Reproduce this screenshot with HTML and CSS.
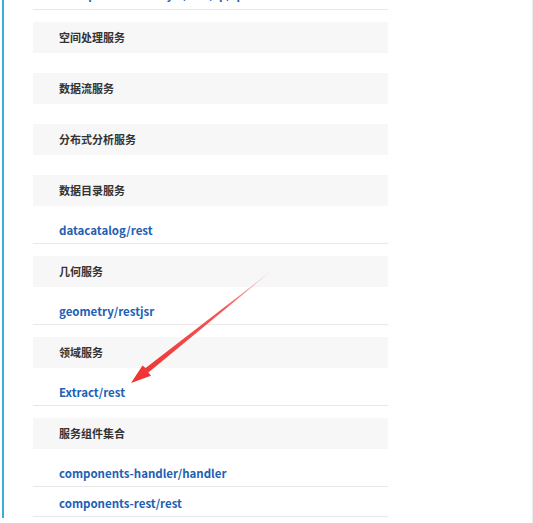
FILE: index.html
```html
<!DOCTYPE html>
<html lang="zh">
<head>
<meta charset="utf-8">
<link rel="stylesheet" href="styles.css">
</head>
<body>
<div class="page">
  <div class="panel">
    <ul class="links top">
      <li><a href="#">transportationanalyst/rest/tp/sp</a></li>
    </ul>
    <section class="group">
      <h3>空间处理服务</h3>
      <ul class="links"></ul>
    </section>
    <section class="group">
      <h3>数据流服务</h3>
      <ul class="links"></ul>
    </section>
    <section class="group">
      <h3>分布式分析服务</h3>
      <ul class="links"></ul>
    </section>
    <section class="group">
      <h3>数据目录服务</h3>
      <ul class="links"><li><a href="#">datacatalog/rest</a></li></ul>
    </section>
    <section class="group">
      <h3>几何服务</h3>
      <ul class="links"><li><a href="#">geometry/restjsr</a></li></ul>
    </section>
    <section class="group">
      <h3>领域服务</h3>
      <ul class="links"><li><a href="#">Extract/rest</a></li></ul>
    </section>
    <section class="group">
      <h3>服务组件集合</h3>
      <ul class="links">
        <li><a href="#">components-handler/handler</a></li>
        <li><a href="#">components-rest/rest</a></li>
      </ul>
    </section>
  </div>
  <svg class="arrow" width="533" height="523" viewBox="0 0 533 523">
    <defs>
      <linearGradient id="fade" x1="275" y1="268" x2="131" y2="383" gradientUnits="userSpaceOnUse">
        <stop offset="0" stop-color="#f23b3b" stop-opacity="0.05"/>
        <stop offset="0.35" stop-color="#f23b3b" stop-opacity="0.85"/>
        <stop offset="1" stop-color="#f03030"/>
      </linearGradient>
    </defs>
    <polygon fill="url(#fade)" points="275,268 148.4,372.4 151,375.8 131,383 142.5,365.5 145.6,368.0"/>
  </svg>
</div>
</body>
</html>
```

FILE: styles.css
```css
html, body {
  margin: 0;
  padding: 0;
  background: #ffffff;
}
body {
  font-family: "Noto Sans CJK SC", "Noto Sans", sans-serif;
  overflow: hidden;
}
.page {
  position: relative;
  width: 532px;
  height: 523px;
  border-right: 1px solid #ececec;
  overflow: hidden;
}
.panel {
  margin-left: 2px;
  margin-top: -20px;
  width: 355px;
  border-left: 2px solid #3ab0d8;
  padding-left: 29px;
  padding-bottom: 1px;
}
.group {
  margin: 12px 0 0 0;
}
.group h3 {
  margin: 0;
  height: 30.5px;
  line-height: 30.5px;
  background: #f7f7f7;
  padding-left: 26px;
  font-size: 11px;
  font-weight: 700;
  color: #333333;
}
.links {
  list-style: none;
  margin: 0;
  padding: 8.5px 0 0 0;
}
.links.top {
  padding-top: 0;
}
.links li {
  height: 29px;
  line-height: 29px;
  border-bottom: 1px solid #e8e8e8;
  padding-left: 26px;
}
.links.top li {
  line-height: 25px;
}
.links a {
  color: #2160b4;
  font-size: 11.5px;
  font-weight: 700;
  text-decoration: none;
}
.arrow {
  position: absolute;
  left: 0;
  top: 0;
  pointer-events: none;
}
```
